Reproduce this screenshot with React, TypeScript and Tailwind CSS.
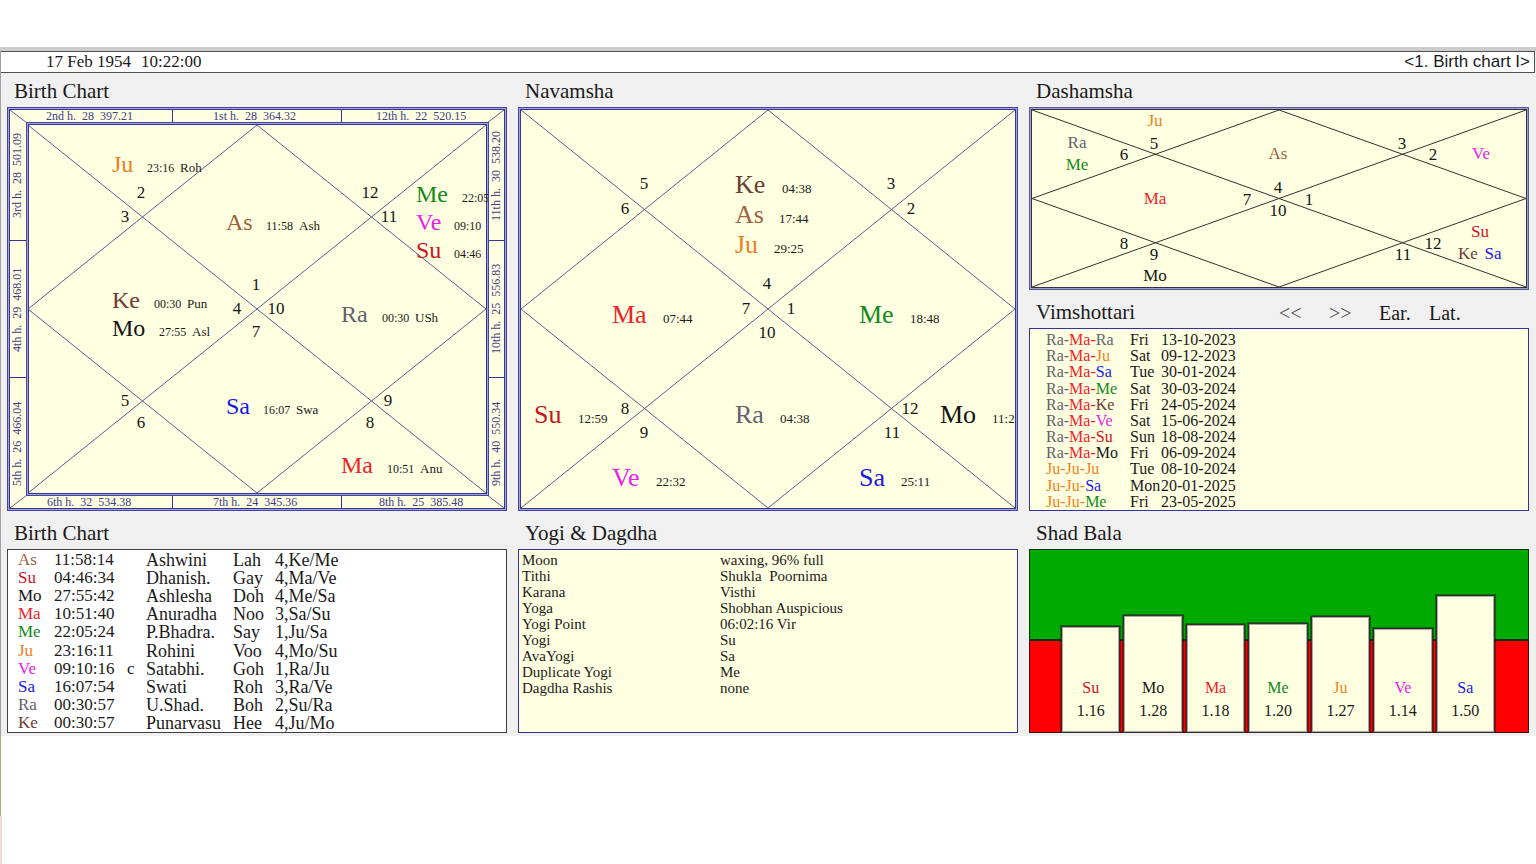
import React from "react";

type Graha = "As" | "Su" | "Mo" | "Ma" | "Me" | "Ju" | "Ve" | "Sa" | "Ra" | "Ke";

const textColor: Record<Graha, string> = {
  As: "text-[#9c6440]",
  Su: "text-[#c8141e]",
  Mo: "text-[#141414]",
  Ma: "text-[#ee222c]",
  Me: "text-[#128a1c]",
  Ju: "text-[#ee7f22]",
  Ve: "text-[#ea20ea]",
  Sa: "text-[#1818e6]",
  Ra: "text-[#62626e]",
  Ke: "text-[#6e3c38]",
};

type Placement = {
  graha: Graha;
  x: number;
  y: number;
  deg?: string;
  degX?: number;
  star?: string;
  starX?: number;
};

type HouseNumber = { n: number; x: number; y: number };

const birthPlacements: Placement[] = [
  { graha: "Ju", x: 105, y: 65, deg: "23:16", degX: 140, star: "Roh", starX: 173 },
  { graha: "As", x: 219, y: 123, deg: "11:58", degX: 259, star: "Ash", starX: 292 },
  { graha: "Me", x: 409, y: 95, deg: "22:05", degX: 455 },
  { graha: "Ve", x: 409, y: 123, deg: "09:10", degX: 447 },
  { graha: "Su", x: 409, y: 151, deg: "04:46", degX: 447 },
  { graha: "Ke", x: 105, y: 201, deg: "00:30", degX: 147, star: "Pun", starX: 180 },
  { graha: "Mo", x: 105, y: 229, deg: "27:55", degX: 152, star: "Asl", starX: 185 },
  { graha: "Ra", x: 334, y: 215, deg: "00:30", degX: 375, star: "USh", starX: 408 },
  { graha: "Sa", x: 219, y: 307, deg: "16:07", degX: 256, star: "Swa", starX: 289 },
  { graha: "Ma", x: 334, y: 366, deg: "10:51", degX: 380, star: "Anu", starX: 413 },
];

const birthHouses: HouseNumber[] = [
  { n: 2, x: 134, y: 91 },
  { n: 3, x: 118, y: 115 },
  { n: 12, x: 363, y: 91 },
  { n: 11, x: 382, y: 115 },
  { n: 1, x: 249, y: 183 },
  { n: 4, x: 230, y: 207 },
  { n: 10, x: 269, y: 207 },
  { n: 7, x: 249, y: 230 },
  { n: 5, x: 118, y: 299 },
  { n: 6, x: 134, y: 321 },
  { n: 9, x: 381, y: 299 },
  { n: 8, x: 363, y: 321 },
];

const navamshaPlacements: Placement[] = [
  { graha: "Ke", x: 217, y: 86, deg: "04:38", degX: 264 },
  { graha: "As", x: 217, y: 116, deg: "17:44", degX: 261 },
  { graha: "Ju", x: 217, y: 146, deg: "29:25", degX: 256 },
  { graha: "Ma", x: 94, y: 216, deg: "07:44", degX: 145 },
  { graha: "Me", x: 341, y: 216, deg: "18:48", degX: 392 },
  { graha: "Su", x: 16, y: 316, deg: "12:59", degX: 60 },
  { graha: "Ra", x: 217, y: 316, deg: "04:38", degX: 262 },
  { graha: "Mo", x: 422, y: 316, deg: "11:2", degX: 474 },
  { graha: "Ve", x: 94, y: 379, deg: "22:32", degX: 138 },
  { graha: "Sa", x: 341, y: 379, deg: "25:11", degX: 383 },
];

const navamshaHouses: HouseNumber[] = [
  { n: 5, x: 126, y: 82 },
  { n: 6, x: 107, y: 107 },
  { n: 3, x: 373, y: 82 },
  { n: 2, x: 393, y: 107 },
  { n: 4, x: 249, y: 182 },
  { n: 7, x: 228, y: 207 },
  { n: 1, x: 273, y: 207 },
  { n: 10, x: 249, y: 231 },
  { n: 8, x: 107, y: 307 },
  { n: 9, x: 126, y: 331 },
  { n: 12, x: 392, y: 307 },
  { n: 11, x: 374, y: 331 },
];

const dashamshaPlacements: Placement[] = [
  { graha: "Ju", x: 126, y: 19 },
  { graha: "Ra", x: 48, y: 41 },
  { graha: "Me", x: 48, y: 63 },
  { graha: "As", x: 249, y: 52 },
  { graha: "Ve", x: 452, y: 52 },
  { graha: "Ma", x: 126, y: 97 },
  { graha: "Mo", x: 126, y: 174 },
  { graha: "Su", x: 451, y: 130 },
  { graha: "Ke", x: 439, y: 152 },
  { graha: "Sa", x: 464, y: 152 },
];

const dashamshaHouses: HouseNumber[] = [
  { n: 5, x: 125, y: 42 },
  { n: 6, x: 95, y: 53 },
  { n: 3, x: 373, y: 42 },
  { n: 2, x: 404, y: 53 },
  { n: 4, x: 249, y: 86 },
  { n: 7, x: 218, y: 98 },
  { n: 1, x: 280, y: 98 },
  { n: 10, x: 249, y: 109 },
  { n: 8, x: 95, y: 142 },
  { n: 9, x: 125, y: 153 },
  { n: 12, x: 404, y: 142 },
  { n: 11, x: 374, y: 153 },
];

const bavTop = [
  { text: "2nd h.  28  397.21", x: 39, y: 13 },
  { text: "1st h.  28  364.32", x: 206, y: 13 },
  { text: "12th h.  22  520.15", x: 369, y: 13 },
  { text: "6th h.  32  534.38", x: 40, y: 399 },
  { text: "7th h.  24  345.36", x: 206, y: 399 },
  { text: "8th h.  25  385.48", x: 372, y: 399 },
];

const bavSide = [
  { text: "3rd h.  28  501.09", x: 14, y: 111 },
  { text: "4th h.  29  468.01", x: 14, y: 245 },
  { text: "5th h.  26  466.04", x: 14, y: 379 },
  { text: "11th h.  30  538.20", x: 493, y: 114 },
  { text: "10th h.  25  556.83", x: 493, y: 247 },
  { text: "9th h.  40  550.34", x: 493, y: 379 },
];

const positions: [Graha, string, string, string, string, string][] = [
  ["As", "11:58:14", "", "Ashwini", "Lah", "4,Ke/Me"],
  ["Su", "04:46:34", "", "Dhanish.", "Gay", "4,Ma/Ve"],
  ["Mo", "27:55:42", "", "Ashlesha", "Doh", "4,Me/Sa"],
  ["Ma", "10:51:40", "", "Anuradha", "Noo", "3,Sa/Su"],
  ["Me", "22:05:24", "", "P.Bhadra.", "Say", "1,Ju/Sa"],
  ["Ju", "23:16:11", "", "Rohini", "Voo", "4,Mo/Su"],
  ["Ve", "09:10:16", "c", "Satabhi.", "Goh", "1,Ra/Ju"],
  ["Sa", "16:07:54", "", "Swati", "Roh", "3,Ra/Ve"],
  ["Ra", "00:30:57", "", "U.Shad.", "Boh", "2,Su/Ra"],
  ["Ke", "00:30:57", "", "Punarvasu", "Hee", "4,Ju/Mo"],
];

const yogi = [
  ["Moon", "waxing, 96% full"],
  ["Tithi", "Shukla  Poornima"],
  ["Karana", "Visthi"],
  ["Yoga", "Shobhan Auspicious"],
  ["Yogi Point", "06:02:16 Vir"],
  ["Yogi", "Su"],
  ["AvaYogi", "Sa"],
  ["Duplicate Yogi", "Me"],
  ["Dagdha Rashis", "none"],
];

const dashas: [Graha, Graha, Graha, string, string][] = [
  ["Ra", "Ma", "Ra", "Fri", "13-10-2023"],
  ["Ra", "Ma", "Ju", "Sat", "09-12-2023"],
  ["Ra", "Ma", "Sa", "Tue", "30-01-2024"],
  ["Ra", "Ma", "Me", "Sat", "30-03-2024"],
  ["Ra", "Ma", "Ke", "Fri", "24-05-2024"],
  ["Ra", "Ma", "Ve", "Sat", "15-06-2024"],
  ["Ra", "Ma", "Su", "Sun", "18-08-2024"],
  ["Ra", "Ma", "Mo", "Fri", "06-09-2024"],
  ["Ju", "Ju", "Ju", "Tue", "08-10-2024"],
  ["Ju", "Ju", "Sa", "Mon", "20-01-2025"],
  ["Ju", "Ju", "Me", "Fri", "23-05-2025"],
];

const shadBala: [Graha, number][] = [
  ["Su", 1.16],
  ["Mo", 1.28],
  ["Ma", 1.18],
  ["Me", 1.2],
  ["Ju", 1.27],
  ["Ve", 1.14],
  ["Sa", 1.5],
];

function Title({ children }: { children: React.ReactNode }) {
  return <h2 className="pl-[7px] pb-1 text-[21px] leading-6">{children}</h2>;
}

// Two thin lines with a paler one between them
function DoubleFrame({ x, y, w, h }: { x: number; y: number; w: number; h: number }) {
  return (
    <g fill="none" shapeRendering="crispEdges">
      <rect x={x + 1.5} y={y + 1.5} width={w - 3} height={h - 3} stroke="#a6a6d4" />
      <rect x={x + 0.5} y={y + 0.5} width={w - 1} height={h - 1} stroke="#4444a0" />
      <rect x={x + 2.5} y={y + 2.5} width={w - 5} height={h - 5} stroke="#34349a" />
    </g>
  );
}

// North Indian layout: two diagonals and the diamond through the mid points
function Diamond({ l, t, r, b, stroke }: { l: number; t: number; r: number; b: number; stroke: string }) {
  const cx = (l + r) / 2;
  const cy = (t + b) / 2;
  return (
    <path
      d={`M${l} ${t}L${r} ${b}M${r} ${t}L${l} ${b}M${cx} ${t}L${r} ${cy}L${cx} ${b}L${l} ${cy}Z`}
      fill="none"
      stroke={stroke}
    />
  );
}

function Houses({ items }: { items: HouseNumber[] }) {
  return (
    <g textAnchor="middle" fill="#141414" className="text-[17px]">
      {items.map((h) => (
        <text key={h.n} x={h.x} y={h.y}>
          {h.n}
        </text>
      ))}
    </g>
  );
}

function BirthChart() {
  return (
    <svg viewBox="0 0 500 404" className="block w-full" role="img" aria-label="Birth chart">
      <defs>
        <clipPath id="birth-clip">
          <rect x="19" y="15" width="462" height="374" />
        </clipPath>
      </defs>
      <rect width="500" height="404" fill="#ffffe1" />
      <Diamond l={21} t={18} r={479} b={386} stroke="#5c5c98" />
      <path d="M3 3L20 16M497 3L480 16M3 401L20 388M497 401L480 388" stroke="#5c5c98" />
      <path
        d="M165.5 3V16M334.5 3V16M165.5 389V401M334.5 389V401M3 133.5H19M3 270.5H19M481 133.5H497M481 270.5H497"
        stroke="#34349a"
        shapeRendering="crispEdges"
      />
      <DoubleFrame x={0} y={0} w={500} h={404} />
      <DoubleFrame x={19} y={15} w={463} h={374} />
      <g fill="#3c3c8c" className="text-[12px]">
        {bavTop.map((b) => (
          <text key={b.text} x={b.x} y={b.y} className="whitespace-pre">
            {b.text}
          </text>
        ))}
        {bavSide.map((b) => (
          <text key={b.text} transform={`translate(${b.x} ${b.y}) rotate(-90)`} className="whitespace-pre">
            {b.text}
          </text>
        ))}
      </g>
      <Houses items={birthHouses} />
      <g fill="currentColor" clipPath="url(#birth-clip)">
        {birthPlacements.map((p) => (
          <React.Fragment key={p.graha}>
            <text x={p.x} y={p.y} className={`text-[24px] ${textColor[p.graha]}`}>
              {p.graha}
            </text>
            <text x={p.degX} y={p.y} className="text-[12px]">
              {p.deg}
            </text>
            {p.star && (
              <text x={p.starX} y={p.y} className="text-[13px]">
                {p.star}
              </text>
            )}
          </React.Fragment>
        ))}
      </g>
    </svg>
  );
}

function Navamsha() {
  return (
    <svg viewBox="0 0 500 404" className="block w-full" role="img" aria-label="Navamsha chart">
      <rect width="500" height="404" fill="#ffffe1" />
      <Diamond l={3} t={3} r={497} b={401} stroke="#5c5c98" />
      <DoubleFrame x={0} y={0} w={500} h={404} />
      <Houses items={navamshaHouses} />
      <g fill="currentColor">
        {navamshaPlacements.map((p) => (
          <React.Fragment key={p.graha}>
            <text x={p.x} y={p.y} className={`text-[26px] ${textColor[p.graha]}`}>
              {p.graha}
            </text>
            <text x={p.degX} y={p.y} className="text-[13px]">
              {p.deg}
            </text>
          </React.Fragment>
        ))}
      </g>
    </svg>
  );
}

function Dashamsha() {
  return (
    <svg viewBox="0 0 500 183" className="block w-full" role="img" aria-label="Dashamsha chart">
      <rect width="500" height="183" fill="#ffffe1" />
      <Diamond l={3} t={3} r={497} b={180} stroke="#303030" />
      <g fill="none" shapeRendering="crispEdges">
        <rect x="1.5" y="1.5" width="497" height="180" stroke="#a0a0c0" />
        <rect x="0.5" y="0.5" width="499" height="182" stroke="#5a5aa4" />
        <rect x="2.5" y="2.5" width="495" height="178" stroke="#303048" />
      </g>
      <Houses items={dashamshaHouses} />
      <g fill="currentColor" textAnchor="middle" className="text-[17px]">
        {dashamshaPlacements.map((p) => (
          <text key={p.graha} x={p.x} y={p.y} className={textColor[p.graha]}>
            {p.graha}
          </text>
        ))}
      </g>
    </svg>
  );
}

export default function App() {
  return (
    <div className="flex flex-col min-h-screen bg-white text-[#1a1a1a] font-['Liberation_Serif','Times_New_Roman',serif]">
      <div className="mt-[47px] h-1 bg-[#cbcbcb]" />

      <div className="border-l border-[#a0a0a0] bg-[#f0f0f0]">
        {/* Date bar */}
        <header className="mr-px flex h-[22px] items-center justify-between border-y border-r border-[#505050] bg-white pl-[45px] pr-1 text-[17px] leading-5">
          <div className="flex gap-[10px]">
            <span>17 Feb 1954</span>
            <span>10:22:00</span>
          </div>
          <button type="button" className="font-['Liberation_Sans',Arial,sans-serif]">
            &lt;1. Birth chart I&gt;
          </button>
        </header>

        <main className="grid grid-cols-3 gap-[11px] pt-[6px] pr-[7px] pb-[3px] pl-[6px]">
          <div className="flex flex-col gap-[10px]">
            <section>
              <Title>Birth Chart</Title>
              <BirthChart />
            </section>
            <section>
              <Title>Birth Chart</Title>
              <div className="h-[184px] border border-[#404040] bg-white pt-px">
                <table className="h-full w-full table-fixed text-left text-[17px] leading-[18px]">
                  <colgroup>
                    <col className="w-[46px]" />
                    <col className="w-[73px]" />
                    <col className="w-[19px]" />
                    <col className="w-[87px]" />
                    <col className="w-[42px]" />
                    <col />
                  </colgroup>
                  <tbody>
                    {positions.map(([g, deg, flag, star, syllable, lords]) => (
                      <tr key={g}>
                        <th scope="row" className={`py-0 pr-0 pl-[10px] font-normal ${textColor[g]}`}>
                          {g}
                        </th>
                        <td className="p-0">{deg}</td>
                        <td className="p-0">{flag}</td>
                        <td className="p-0 text-[18px]">{star}</td>
                        <td className="p-0 text-[18px]">{syllable}</td>
                        <td className="p-0 text-[18px]">{lords}</td>
                      </tr>
                    ))}
                  </tbody>
                </table>
              </div>
            </section>
          </div>

          <div className="flex flex-col gap-[10px]">
            <section>
              <Title>Navamsha</Title>
              <Navamsha />
            </section>
            <section>
              <Title>Yogi &amp; Dagdha</Title>
              <div className="h-[184px] border border-[#34349a] bg-[#ffffe1] pt-[2px] pl-[3px]">
                <table className="w-full table-fixed text-left text-[15px] leading-4">
                  <colgroup>
                    <col className="w-[198px]" />
                    <col />
                  </colgroup>
                  <tbody>
                    {yogi.map(([label, value]) => (
                      <tr key={label}>
                        <th scope="row" className="p-0 font-normal">
                          {label}
                        </th>
                        <td className="whitespace-pre p-0">{value}</td>
                      </tr>
                    ))}
                  </tbody>
                </table>
              </div>
            </section>
          </div>

          <div className="flex flex-col gap-[10px]">
            <section>
              <Title>Dashamsha</Title>
              <Dashamsha />
            </section>
            <section>
              <div className="flex items-start">
                <div className="w-[250px]">
                  <Title>Vimshottari</Title>
                </div>
                <div className="flex text-[20px] leading-[26px]">
                  <button type="button" className="w-[50px] text-left text-[#505050]">
                    &lt;&lt;
                  </button>
                  <button type="button" className="w-[50px] text-left text-[#505050]">
                    &gt;&gt;
                  </button>
                  <button type="button" className="w-[50px] text-left">
                    Ear.
                  </button>
                  <button type="button" className="text-left">
                    Lat.
                  </button>
                </div>
              </div>
              <div className="h-[183px] border border-[#34349a] bg-[#ffffe1] pt-[3px]">
                <table className="h-full w-full table-fixed text-left text-[16px] leading-4">
                  <colgroup>
                    <col className="w-[100px]" />
                    <col className="w-[31px]" />
                    <col />
                  </colgroup>
                  <tbody>
                    {dashas.map(([a, b, c, day, date]) => (
                      <tr key={date}>
                        <td className="py-0 pr-0 pl-4">
                          <span className={textColor[a]}>{a}-</span>
                          <span className={textColor[b]}>{b}-</span>
                          <span className={textColor[c]}>{c}</span>
                        </td>
                        <td className="p-0">{day}</td>
                        <td className="p-0">{date}</td>
                      </tr>
                    ))}
                  </tbody>
                </table>
              </div>
            </section>
            <section>
              <Title>Shad Bala</Title>
              {/* Red up to the required strength of 1.00, green above it */}
              <div className="grid h-[184px] grid-rows-2 overflow-hidden text-center text-[16px] leading-[23px]">
                <div className="col-start-1 row-start-1 border border-b-2 border-[#103010] bg-[#00aa00]" />
                <div className="col-start-1 row-start-2 border border-t-0 border-[#401010] bg-[#ff0000]" />
                <div className="col-start-1 row-span-2 row-start-1 flex items-end gap-[3px] pl-8 pr-[34px]">
                  {shadBala.map(([g, value]) => (
                    <div
                      key={g}
                      className="flex flex-1 flex-col justify-end border border-[#303030] bg-[#ffffe1] pb-[10px] shadow-[0_0_0_1px_rgba(0,0,0,0.35),inset_0_0_0_1px_#a8a8a0]"
                      style={{ height: `${value * 50}%` }}
                    >
                      <div className={textColor[g]}>{g}</div>
                      <div>{value.toFixed(2)}</div>
                    </div>
                  ))}
                </div>
              </div>
            </section>
          </div>
        </main>
      </div>

      {/* Window edge below the panels */}
      <div className="h-20 w-px bg-[#b4ac78]" />
      <div className="w-[2px] flex-1 bg-[#f3dcd4]" />
    </div>
  );
}
